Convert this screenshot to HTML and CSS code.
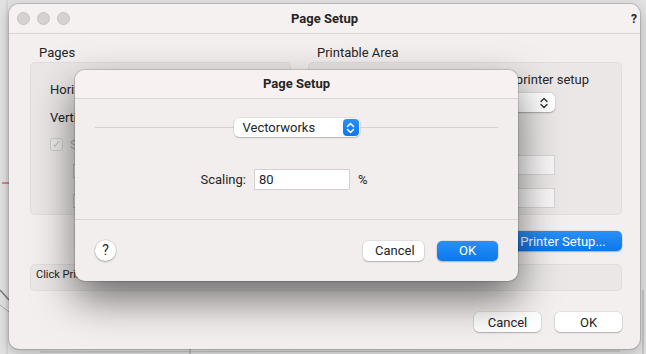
FILE: index.html
```html
<!DOCTYPE html>
<html lang="en">
<head>
    <meta charset="UTF-8">
    <meta name="viewport" content="width=device-width, initial-scale=1.0">
    <title>Page Setup</title>
    <link rel="stylesheet" href="styles.css">
</head>
<body>
    <!-- drawing behind the window -->
    <svg class="desk" width="646" height="354" viewBox="0 0 646 354">
        <line x1="7" y1="0" x2="7" y2="354" stroke="#c9c9c9" stroke-width="1"/>
        <line x1="2" y1="183" x2="10" y2="183" stroke="#b03030" stroke-width="1"/>
        <line x1="0" y1="290" x2="9" y2="300" stroke="#777" stroke-width="1.5"/>
        <line x1="0" y1="305" x2="9" y2="312" stroke="#aaa" stroke-width="1"/>
        <line x1="40" y1="352" x2="620" y2="351" stroke="#bbb" stroke-width="1"/>
        <line x1="190" y1="349" x2="190" y2="354" stroke="#999" stroke-width="1"/>
        <line x1="643" y1="290" x2="643" y2="354" stroke="#aaa" stroke-width="1"/>
    </svg>

    <div class="window">
        <div class="titlebar">
            <div class="lights"><span></span><span></span><span></span></div>
            <div class="title">Page Setup</div>
            <div class="help-mark">?</div>
        </div>

        <div class="content">
            <div class="groups">
                <div class="group">
                    <div class="group-label">Pages</div>
                    <div class="box pages-box">
                        <div class="line first">Horizontal pages:</div>
                        <div class="line">Vertical pages:</div>
                        <div class="check-row">
                            <span class="checkbox">✓</span>
                            <span class="dim">Scale to fit</span>
                        </div>
                        <div class="stub"></div>
                        <div class="stub"></div>
                    </div>
                </div>
                <div class="group">
                    <div class="group-label">Printable Area</div>
                    <div class="box area-box">
                        <div class="line area-text">Use printer setup</div>
                        <div class="select">
                            <svg width="8" height="12" viewBox="0 0 8 12">
                                <path d="M1 4.5 L4 1.5 L7 4.5 M1 7.5 L4 10.5 L7 7.5" fill="none" stroke="#333" stroke-width="1.4" stroke-linecap="round" stroke-linejoin="round"/>
                            </svg>
                        </div>
                        <div class="field first-field"></div>
                        <div class="field"></div>
                    </div>
                </div>
            </div>

            <div class="setup-row">
                <button class="btn primary setup-btn">Printer Setup...</button>
            </div>

            <div class="note">Click Printer Setup first.</div>

            <div class="actions">
                <button class="btn wide">Cancel</button>
                <button class="btn wide">OK</button>
            </div>
        </div>

        <!-- sheet on top of the window -->
        <div class="sheet">
            <div class="sheet-title">Page Setup</div>
            <div class="sheet-body">
                <div class="popup-row">
                    <div class="rule"></div>
                    <div class="popup">
                        <span>Vectorworks</span>
                        <span class="stepper">
                            <svg width="9" height="12" viewBox="0 0 9 12">
                                <path d="M1.5 4.5 L4.5 1.5 L7.5 4.5 M1.5 7.5 L4.5 10.5 L7.5 7.5" fill="none" stroke="#fff" stroke-width="1.5" stroke-linecap="round" stroke-linejoin="round"/>
                            </svg>
                        </span>
                    </div>
                    <div class="rule"></div>
                </div>
                <div class="scale-row">
                    <label class="scale-label">Scaling:</label>
                    <div class="scale-field">80</div>
                    <span>%</span>
                </div>
            </div>
            <div class="sheet-footer">
                <span class="help">?</span>
                <div class="sheet-actions">
                    <button class="btn">Cancel</button>
                    <button class="btn primary">OK</button>
                </div>
            </div>
        </div>
    </div>
</body>
</html>
```

FILE: styles.css
```css
* {
    margin: 0;
    padding: 0;
    box-sizing: border-box;
}

body {
    width: 646px;
    height: 354px;
    overflow: hidden;
    position: relative;
    background: #e2e2e2;
    font-family: Roboto, "Liberation Sans", sans-serif;
    font-size: 13px;
    color: #262424;
}

.desk {
    position: absolute;
    left: 0;
    top: 0;
}

button {
    font-family: inherit;
    font-size: 13px;
    color: #262424;
    border: none;
}

/* outer window */
.window {
    position: absolute;
    left: 9px;
    top: 4px;
    width: 631px;
    height: 345px;
    background: #f4efef;
    border-radius: 10px;
    box-shadow: 0 0 0 1px rgba(0, 0, 0, 0.14), 0 4px 14px rgba(0, 0, 0, 0.22);
}

.titlebar {
    height: 30px;
    display: grid;
    grid-template-columns: 1fr auto 1fr;
    align-items: center;
    border-bottom: 1px solid #d9d4d4;
    border-radius: 10px 10px 0 0;
    background: #f6f1f1;
}

.lights {
    display: flex;
    gap: 7px;
    padding-left: 8px;
}

.lights span {
    width: 13px;
    height: 13px;
    border-radius: 50%;
    background: #d6d2d2;
    border: 1px solid #c8c3c3;
}

.title {
    font-weight: bold;
}

.help-mark {
    justify-self: end;
    padding-right: 3px;
    font-weight: bold;
    font-size: 12px;
}

.content {
    padding: 11px 18px 0 21px;
}

.groups {
    display: flex;
    gap: 17px;
}

.group-label {
    line-height: 16px;
    margin-bottom: 1px;
    padding-left: 9px;
}

.box {
    height: 153px;
    background: #ebe7e7;
    border: 1px solid #e2dddd;
    border-radius: 5px;
}

.pages-box {
    width: 261px;
    padding: 19px 0 0 19px;
}

.area-box {
    width: 314px;
    display: flex;
    flex-direction: column;
    align-items: flex-end;
    padding: 9px 32px 0 0;
}

.line {
    line-height: 16px;
}

.pages-box .line + .line {
    margin-top: 12px;
}

.check-row {
    display: flex;
    align-items: center;
    gap: 7px;
    margin-top: 11px;
}

.checkbox {
    width: 13px;
    height: 13px;
    border: 1px solid #d3cece;
    border-radius: 3px;
    background: #efecec;
    color: #c4bfbf;
    font-size: 11px;
    line-height: 11px;
    text-align: center;
}

.dim {
    color: #b7b2b2;
}

.stub {
    width: 40px;
    height: 14px;
    margin: 12px 0 0 23px;
    border: 1px solid #c6c1c1;
    background: #fff;
}

.stub + .stub {
    margin-top: 16px;
}

.select {
    width: 60px;
    height: 19px;
    margin: 5px 34px 0 0;
    display: flex;
    align-items: center;
    justify-content: flex-end;
    padding-right: 7px;
    background: #fff;
    border-radius: 5px;
    box-shadow: 0 0.5px 1.5px rgba(0, 0, 0, 0.3);
}

.field {
    width: 60px;
    height: 20px;
    margin: 13px 34px 0 0;
    background: #f8f6f6;
    border: 1px solid #d8d4d4;
}

.first-field {
    margin-top: 43px;
}

.setup-row {
    display: flex;
    justify-content: flex-end;
    margin-top: 16px;
}

.btn {
    height: 20px;
    padding: 0 12px;
    border-radius: 5px;
    background: #fff;
    box-shadow: 0 0 0 0.5px rgba(0, 0, 0, 0.12), 0 1px 1.5px rgba(0, 0, 0, 0.22);
}

.primary {
    color: #fff;
    background: linear-gradient(#2a8ff8, #0c78ec);
}

.setup-btn {
    width: 118px;
}

.note {
    height: 27px;
    margin-top: 13px;
    padding: 3px 5px;
    font-size: 11px;
    background: #ebe7e7;
    border: 1px solid #e2dddd;
    border-radius: 5px;
}

.actions {
    display: flex;
    justify-content: flex-end;
    gap: 14px;
    margin-top: 21px;
}

.wide {
    width: 67px;
}

/* sheet */
.sheet {
    position: absolute;
    left: 66px;
    top: 66px;
    width: 443px;
    height: 211px;
    background: #f3eeee;
    border-radius: 10px;
    box-shadow: 0 0 0 1px rgba(0, 0, 0, 0.13), 0 18px 42px rgba(0, 0, 0, 0.55);
    display: flex;
    flex-direction: column;
}

.sheet-title {
    height: 29px;
    line-height: 28px;
    text-align: center;
    font-weight: bold;
    background: #f7f1f1;
    border-bottom: 1px solid #dcd7d7;
    border-radius: 10px 10px 0 0;
}

.sheet-body {
    height: 121px;
    border-bottom: 1px solid #dcd7d7;
}

.popup-row {
    display: flex;
    align-items: center;
    padding: 19px 20px 0;
}

.rule {
    flex: 1;
    height: 1px;
    background: #d6d1d1;
}

.popup {
    width: 126px;
    height: 19px;
    display: flex;
    align-items: center;
    justify-content: space-between;
    padding: 0 1px 0 9px;
    background: #fff;
    border-radius: 5px;
    box-shadow: 0 0 0 0.5px rgba(0, 0, 0, 0.1), 0 1px 1.5px rgba(0, 0, 0, 0.2);
}

.stepper {
    width: 16px;
    height: 17px;
    display: flex;
    align-items: center;
    justify-content: center;
    border-radius: 4px;
    background: linear-gradient(#2a8ff8, #0c78ec);
}

.scale-row {
    display: flex;
    align-items: center;
    gap: 8px;
    margin-top: 32px;
    padding-left: 20px;
}

.scale-label {
    width: 151px;
    text-align: right;
}

.scale-field {
    width: 96px;
    height: 21px;
    padding: 0 4px;
    line-height: 20px;
    background: #fff;
    border: 1px solid #d4d0d0;
}

.sheet-footer {
    flex: 1;
    display: flex;
    align-items: center;
    justify-content: space-between;
    padding: 0 20px;
}

.help {
    width: 21px;
    height: 21px;
    border-radius: 50%;
    background: #fff;
    box-shadow: 0 0 0 0.5px rgba(0, 0, 0, 0.12), 0 1px 2px rgba(0, 0, 0, 0.25);
    text-align: center;
    line-height: 21px;
    font-size: 14px;
}

.sheet-actions {
    display: flex;
    gap: 13px;
}

.sheet-actions .btn {
    width: 61px;
}
```
